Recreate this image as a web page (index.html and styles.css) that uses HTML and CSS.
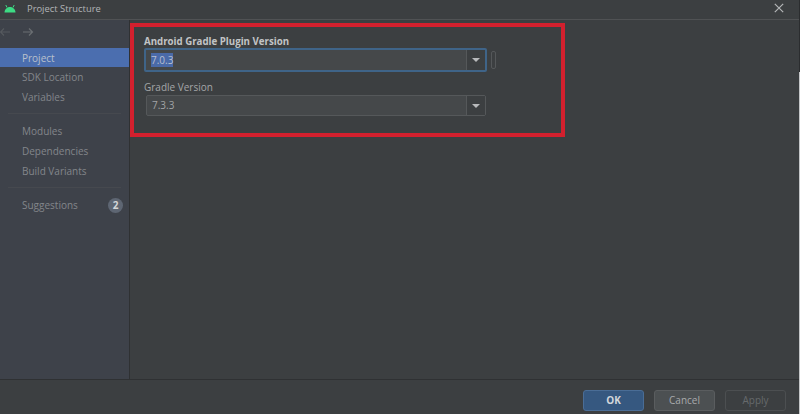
FILE: index.html
```html
<!DOCTYPE html>
<html lang="en">
<head>
<meta charset="utf-8">
<title>Project Structure</title>
<link rel="stylesheet" href="styles.css">
</head>
<body>
<div class="window">
  <header class="titlebar">
    <svg class="logo" viewBox="0 0 12 9" width="12" height="9"><path d="M.5 8.500C.5 5.500 2.800 3 6 3s5.500 2.500 5.500 5.500Z" fill="#3ddc84"/><path d="M3 3.500 1.800 1M9 3.500 10.200 1" stroke="#3ddc84" stroke-width="1" fill="none"/></svg>
    <span class="title">Project Structure</span>
    <svg class="close" viewBox="0 0 10 10" width="10" height="10"><path d="M.8.8l8.400 8.400M9.200.8.8 9.200" stroke="#b4b6b8" stroke-width="1.200" fill="none"/></svg>
  </header>
  <div class="main">
    <nav class="sidebar">
      <div class="history">
        <svg viewBox="0 0 12 10" width="12" height="10"><path d="M11 5H1.500M5 1.500 1.500 5 5 8.500" stroke="#55595e" stroke-width="1.200" fill="none"/></svg>
        <svg viewBox="0 0 12 10" width="12" height="10"><path d="M1 5h9.500M7 1.500 10.500 5 7 8.500" stroke="#6a6e72" stroke-width="1.200" fill="none"/></svg>
      </div>
      <div class="item active">Project</div>
      <div class="item">SDK Location</div>
      <div class="item">Variables</div>
      <div class="sep"></div>
      <div class="item">Modules</div>
      <div class="item">Dependencies</div>
      <div class="item">Build Variants</div>
      <div class="sep"></div>
      <div class="item suggest"><span>Suggestions</span><span class="badge">2</span></div>
    </nav>
    <main class="content">
      <label class="label strong">Android Gradle Plugin Version</label>
      <div class="combo-row">
        <div class="combo focus">
          <div class="value"><span class="sel">7.0.3</span></div>
          <div class="arrow"><i></i></div>
        </div>
        <div class="stub"></div>
      </div>
      <label class="label second">Gradle Version</label>
      <div class="combo plain">
        <div class="value">7.3.3</div>
        <div class="arrow"><i></i></div>
      </div>
      <div class="highlight"></div>
    </main>
  </div>
  <footer class="footer">
    <button class="btn ok">OK</button>
    <button class="btn cancel">Cancel</button>
    <button class="btn apply">Apply</button>
  </footer>
  <div class="edge-dark"></div>
  <div class="edge-light"></div>
</div>
</body>
</html>
```
FILE: styles.css
```css
* { box-sizing: border-box; }
html, body { margin: 0; padding: 0; }
body { width: 800px; height: 414px; overflow: hidden; background: #3c3f41; font-family: "Open Sans", "Noto Sans", sans-serif; font-size: 10px; color: #a9abad; }
.window { position: relative; display: flex; flex-direction: column; height: 414px; }
.titlebar { display: flex; align-items: center; height: 20px; padding: 0 16px 3px 4px; background: #3c3f41; border-bottom: 1px solid #505254; flex: none; }
.logo { flex: none; }
.title { margin-left: 11px; color: #b2b4b6; font-size: 9.4px; }
.close { margin-left: auto; }
.main { display: flex; flex: 1; min-height: 0; }
.sidebar { width: 130px; flex: none; background: #3e424a; border-right: 1px solid #2f3133; }
.history { display: flex; gap: 11px; height: 28px; padding: 7px 0 0 0; }
.history svg { flex: none; }
.history svg:first-child { margin-left: -1px; }
.item { height: 20px; line-height: 20px; padding-left: 22px; color: #83868a; font-size: 10px; }
.active { height: 19px; background: #4b6eaf; color: #b9c0cc; }
.sep { height: 1px; margin: 6px 8px 7px 8px; background: #46494f; }
.suggest { display: flex; align-items: center; justify-content: space-between; padding-right: 6px; }
.badge { width: 15px; height: 15px; border-radius: 50%; background: #5e6673; color: #d4d6d8; font-size: 10px; font-weight: 700; line-height: 15px; text-align: center; }
.content { position: relative; flex: 1; background: #3c3f41; padding: 15px 0 0 14px; }
.label { display: block; font-size: 10px; line-height: 14px; color: #a4a6a8; }
.strong { font-weight: 700; font-size: 9.7px; line-height: 13px; color: #c2c4c6; }
.second { margin-top: 8px; }
.combo-row { display: flex; align-items: center; gap: 4px; }
.combo { display: flex; width: 340px; height: 21px; background: #45484a; border: 1px solid #55585a; border-radius: 2px; }
.focus { width: 343px; height: 24px; border: 2px solid #3f6488; }
.plain { margin-top: 1px; margin-left: 2px; }
.value { flex: 1; padding-left: 5px; line-height: 19px; color: #a2a4a6; font-size: 10px; }
.focus .value { line-height: 20px; }
.sel { background: #4a6aa8; color: #b7bfd0; display: inline-block; height: 14px; line-height: 14px; }
.arrow { width: 19px; flex: none; display: flex; align-items: center; justify-content: center; background: #3c3f41; border-left: 1px solid #55585a; }
.arrow i { display: block; width: 0; height: 0; border-left: 4px solid transparent; border-right: 4px solid transparent; border-top: 4px solid #b8babc; }
.stub { width: 5px; height: 18px; border: 1px solid #55585a; border-radius: 2px; }
.highlight { position: absolute; left: 0; top: 3px; width: 435px; height: 114px; border: 4px solid #d3202e; pointer-events: none; }
.edge-dark { position: absolute; right: 0; top: 0; width: 1px; height: 72px; background: #2b2d2f; }
.edge-light { position: absolute; right: 0; top: 72px; bottom: 0; width: 1px; background: #c4c6c8; }
.footer { height: 35px; flex: none; display: flex; align-items: center; justify-content: flex-end; gap: 10px; padding: 6px 14px 0 0; background: #3c3f41; border-top: 1px solid #2f3133; }
.btn { width: 61px; height: 21px; padding: 0; border-radius: 3px; font-family: inherit; font-size: 10px; border: 1px solid #5a5d5f; background: #4c5052; color: #a8aaac; }
.ok { background: #365880; border-color: #4a6d96; color: #d3d6da; font-weight: 700; }
.apply { background: #3c3f41; border-color: #4c4f51; color: #666a6c; }
```
